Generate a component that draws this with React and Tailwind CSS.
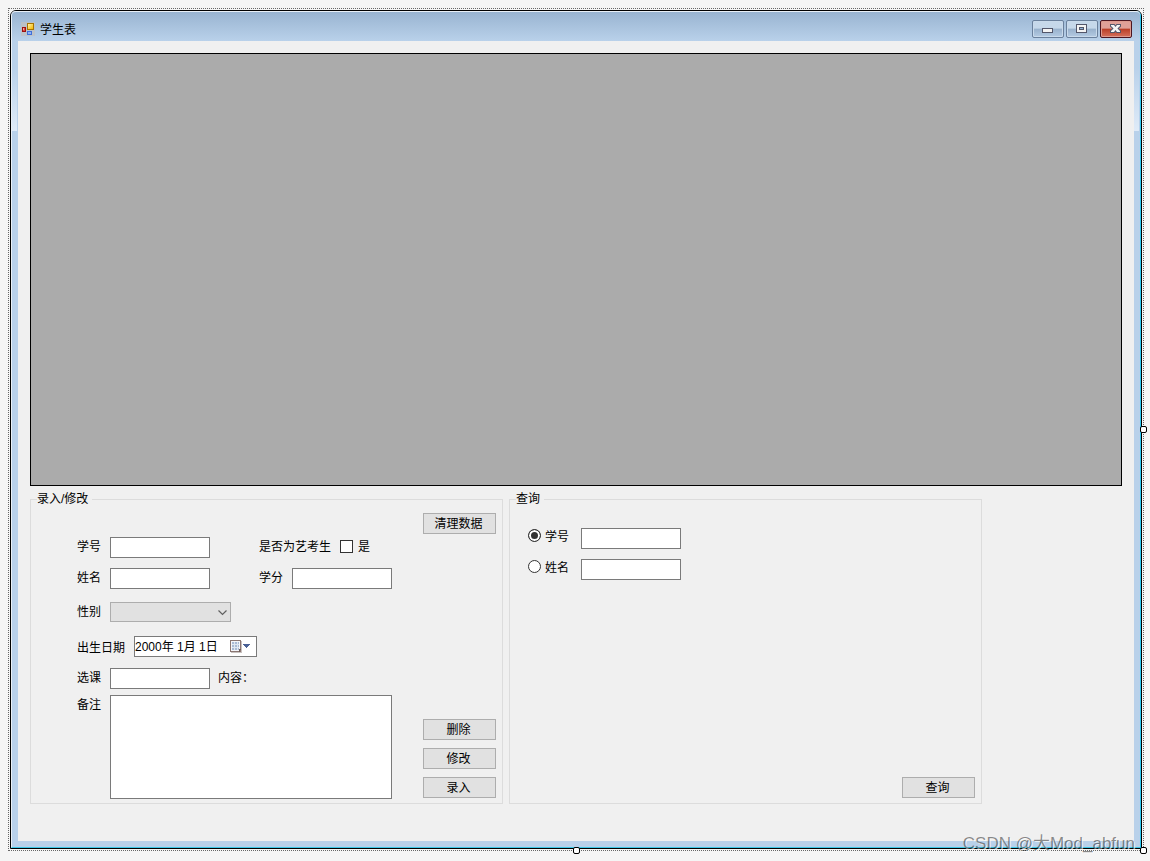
import { useState } from "react";

const inputClass = "h-[21px] w-[100px] border border-[#7a7a7a] bg-white px-1 outline-none";

// Small icon at the left of the title bar
function FormIcon() {
    return (
        <svg width="14" height="14" viewBox="0 0 14 14" shapeRendering="crispEdges" aria-hidden="true">
            <defs>
                <linearGradient id="formYellow" x1="0" y1="0" x2="1" y2="1">
                    <stop offset="0" stopColor="#fff3a8" />
                    <stop offset="1" stopColor="#f5b800" />
                </linearGradient>
            </defs>
            <rect width="14" height="14" fill="#c0c0c0" fillOpacity="0.75" />
            <rect x="1" y="5" width="4" height="5" fill="#9c1010" />
            <rect x="2" y="6" width="2" height="3" fill="#e04a3c" />
            <rect x="2" y="6" width="1" height="2" fill="#f3a59c" />
            <rect x="6" y="1" width="7" height="7" fill="#a87400" />
            <rect x="7" y="2" width="5" height="5" fill="url(#formYellow)" />
            <rect x="6" y="9" width="5" height="4" fill="#3f6fd8" />
            <rect x="7" y="10" width="3" height="2" fill="#8fb2f7" />
        </svg>
    );
}

function MinimizeIcon() {
    return (
        <svg width="30" height="16" viewBox="0 0 30 16" shapeRendering="crispEdges" aria-hidden="true">
            <rect x="9" y="7" width="11" height="5" fill="#53566a" />
            <rect x="10" y="8" width="9" height="3" fill="#f3f3f3" />
        </svg>
    );
}

function MaximizeIcon() {
    return (
        <svg width="30" height="16" viewBox="0 0 30 16" shapeRendering="crispEdges" aria-hidden="true">
            <rect x="9" y="3" width="11" height="9" fill="#53566a" />
            <rect x="10" y="4" width="9" height="7" fill="#f3f3f3" />
            <rect x="12" y="6" width="5" height="3" fill="#53566a" />
            <rect x="13" y="7" width="3" height="1" fill="#8fb3d6" />
        </svg>
    );
}

function CloseIcon() {
    return (
        <svg width="30" height="16" viewBox="0 0 30 16" aria-hidden="true">
            <path d="M9 3h4.5L14.5 4.2 15.5 3H20v2.6L17.8 7.5 20 9.4V12h-4.5l-1-1.2-1 1.2H9V9.4l2.2-1.9L9 5.6z" fill="#53566a" />
            <path d="M10 4h3l1.5 2L16 4h3v1l-2.6 2.5L19 10v1h-3l-1.5-2-1.5 2h-3v-1l2.6-2.5L10 5z" fill="#f4f4f4" />
        </svg>
    );
}

function CalendarIcon() {
    return (
        <svg width="21" height="13" viewBox="0 0 21 13" shapeRendering="crispEdges" aria-hidden="true">
            <rect x="1" y="1" width="11" height="12" fill="#c9c2c0" />
            <rect x="0" y="0" width="11" height="12" fill="#8b7672" />
            <rect x="1" y="1" width="9" height="10" fill="#f4f5f9" />
            <rect x="2" y="2" width="7" height="8" fill="#a9b9d3" />
            <path d="M2 4.5h7M2 7.5h7M4.5 2v8M7.5 2v8" stroke="#dfe6f0" strokeWidth="1" />
            <path d="M9 9h2v1h-1v2h-1z" fill="#6d5c59" />
            <path d="M13 4h7v1h-1v1h-1v1h-1v1h-1v-1h-1v-1h-1v-1h-1z" fill="#4a6196" />
        </svg>
    );
}

function TitleBar() {
    const captionClass =
        "h-[18px] w-8 rounded-xs border border-[#6a809c] bg-linear-to-b from-[#c6d8ea] from-45% via-[#98b1cc] via-50% to-[#b4cbe3] shadow-[inset_0_0_0_1px_#c9daeb]";
    return (
        <header className="flex items-center rounded-t border-t border-[#e9f0f7] bg-linear-to-b from-[#99b4d1] to-[#b9d1ea] pt-2 pr-2 pb-[3px] pl-[9px]">
            <FormIcon />
            <h1 className="ml-[5px] flex-1 pt-0.5 leading-4">学生表</h1>
            <div className="flex gap-0.5">
                <button type="button" aria-label="最小化" className={captionClass}><MinimizeIcon /></button>
                <button type="button" aria-label="最大化" className={captionClass}><MaximizeIcon /></button>
                <button type="button" aria-label="关闭" className="h-[18px] w-8 rounded-xs border border-[#4c1520] bg-linear-to-b from-[#e0a098] from-45% via-[#b93d26] via-50% to-[#d5705c] shadow-[inset_0_0_0_1px_#dd9a8f]"><CloseIcon /></button>
            </div>
        </header>
    );
}

// Side of the window frame, with the shine under the title bar
function FrameSide() {
    return (
        <div className="w-1.5 shrink-0 bg-[#b9d1ea]">
            <div className="mr-px h-[90px] bg-linear-to-b from-[#b9d1ea] from-30% to-[#dfebf8]" />
        </div>
    );
}

function PushButton({ children }) {
    return (
        <button type="button" className="h-[21px] w-[73px] border border-[#adadad] bg-[#e1e1e1] pr-0.5 leading-4 hover:bg-[#e5f1fb]">
            {children}
        </button>
    );
}

function GroupBox({ title, children }) {
    return (
        <fieldset className="flex max-w-[473px] flex-1 border border-[#dcdcdc]">
            <legend className="ml-1.5 pr-1 leading-3">{title}</legend>
            {children}
        </fieldset>
    );
}

function EditBox() {
    return (
        <GroupBox title="录入/修改">
            <div className="flex flex-1 pr-1.5 pb-1 pl-[46px]">
                <div className="flex-1 pt-8">
                    <div className="flex items-center">
                        <label htmlFor="sno" className="w-[33px] pb-0.5">学号</label>
                        <input id="sno" type="text" className={inputClass} />
                        <span className="ml-[49px] w-[81px] pb-0.5">是否为艺考生</span>
                        <label className="flex items-center gap-[5px] pb-0.5">
                            <input type="checkbox" className="size-[13px] appearance-none border border-[#333333] bg-white checked:bg-[#333333]" />
                            是
                        </label>
                    </div>
                    <div className="mt-2.5 flex items-center">
                        <label htmlFor="name" className="w-[33px] pb-0.5">姓名</label>
                        <input id="name" type="text" className={inputClass} />
                        <label htmlFor="credit" className="ml-[49px] w-[33px] pb-0.5">学分</label>
                        <input id="credit" type="text" className={inputClass} />
                    </div>
                    <div className="mt-[13px] flex items-center">
                        <label htmlFor="gender" className="w-[33px]">性别</label>
                        <div className="relative h-5">
                            <select id="gender" defaultValue="" className="h-5 w-[121px] appearance-none border border-[#adadad] bg-[#e1e1e1] px-1 leading-4">
                                <option value=""></option>
                                <option>男</option>
                                <option>女</option>
                            </select>
                            <svg className="pointer-events-none absolute top-2 right-1" width="9" height="6" viewBox="0 0 9 6" aria-hidden="true">
                                <path d="M0.5 0.5l4 4 4-4" fill="none" stroke="#606060" strokeWidth="1.2" />
                            </svg>
                        </div>
                    </div>
                    <div className="mt-3.5 flex items-center">
                        <label htmlFor="birth" className="w-[57px] pt-0.5">出生日期</label>
                        <div className="flex h-[21px] w-[123px] items-center border border-[#7a7a7a] bg-white">
                            <input id="birth" type="text" defaultValue="2000年 1月 1日" className="w-[95px] leading-4 outline-none" />
                            <button type="button" aria-label="选择日期"><CalendarIcon /></button>
                        </div>
                    </div>
                    <div className="mt-[11px] flex items-center">
                        <label htmlFor="course" className="w-[33px] pb-0.5">选课</label>
                        <input id="course" type="text" className={inputClass} />
                        <span className="ml-2 pb-0.5">内容：</span>
                    </div>
                    <div className="mt-1.5 flex items-start">
                        <label htmlFor="remark" className="w-[33px] pt-0.5">备注</label>
                        <textarea id="remark" className="h-[104px] w-[282px] resize-none border border-[#7a7a7a] bg-white p-1 outline-none" />
                    </div>
                </div>
                <div className="flex flex-col gap-2 pt-2 pb-px">
                    <PushButton>清理数据</PushButton>
                    <div className="flex-1" />
                    <PushButton>删除</PushButton>
                    <PushButton>修改</PushButton>
                    <PushButton>录入</PushButton>
                </div>
            </div>
        </GroupBox>
    );
}

function QueryBox() {
    const [by, setBy] = useState("学号");
    return (
        <GroupBox title="查询">
            <div className="flex flex-1 items-stretch pr-1.5 pb-[5px] pl-[18px]">
                <div className="flex flex-1 flex-col gap-2.5 pt-[23px]">
                    {["学号", "姓名"].map((item) => (
                        <div key={item} className="flex items-start">
                            <label className="flex w-[53px] items-start gap-1 pt-px">
                                <input
                                    type="radio"
                                    name="by"
                                    checked={by === item}
                                    onChange={() => setBy(item)}
                                    className="size-[13px] appearance-none rounded-full border border-[#333333] bg-white checked:bg-[#333333] checked:shadow-[inset_0_0_0_2px_white]"
                                />
                                {item}
                            </label>
                            <input type="text" aria-label={item} className={inputClass} />
                        </div>
                    ))}
                </div>
                <div className="flex items-end">
                    <PushButton>查询</PushButton>
                </div>
            </div>
        </GroupBox>
    );
}

export default function App() {
    const handleClass = "absolute size-[7px] rounded-xs border border-black bg-white";
    return (
        <div className="flex min-h-screen bg-[#f5f5f5] pt-2 pr-1.5 pb-2.5 pl-2 font-['Liberation_Sans','Noto_Sans_CJK_SC',sans-serif] text-xs leading-4 text-black">
            {/* Selection frame */}
            <div className="relative flex flex-1 border border-dotted border-[#666666] p-px">
                {/* Window */}
                <div className="flex flex-1 flex-col rounded-t-md border border-black bg-[#b9d1ea]">
                    <div className="flex flex-1 flex-col rounded-t-[5px] border-r border-b border-l border-r-[#2cc8f0] border-b-[#3cc8e8] border-l-[#e9f0f7]">
                        <TitleBar />
                        <div className="flex flex-1">
                            <FrameSide />
                            <main className="mb-1.5 flex flex-1 flex-col bg-[#f0f0f0] px-3 pt-3 pb-[37px]">
                                <div className="flex-1 border border-black bg-[#ababab]" />
                                <div className="mt-[7px] flex gap-1.5">
                                    <EditBox />
                                    <QueryBox />
                                </div>
                            </main>
                            <FrameSide />
                        </div>
                    </div>
                </div>
                <span className={`${handleClass} top-1/2 -right-1 -mt-1`} />
                <span className={`${handleClass} -bottom-1 left-1/2 -ml-[3px]`} />
                <span className={`${handleClass} -right-1 -bottom-1`} />
                <p className="absolute right-2 -bottom-1 text-[17px] leading-5 text-black/45 [text-shadow:1px_1px_0_rgba(255,255,255,0.7)]">
                    CSDN @大Mod_abfun
                </p>
            </div>
        </div>
    );
}
